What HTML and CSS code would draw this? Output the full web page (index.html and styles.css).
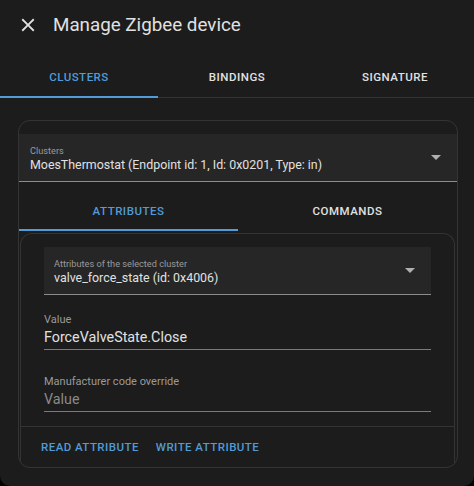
FILE: index.html
```html
<!DOCTYPE html>
<html>
<head>
<meta charset="utf-8">
<link rel="stylesheet" href="styles.css">
</head>
<body>
<div class="dialog">
  <div class="header">
    <svg class="close" viewBox="0 0 24 24" width="22" height="22"><path fill="#e1e1e1" d="M19,6.41L17.59,5L12,10.59L6.41,5L5,6.41L10.59,12L5,17.59L6.41,19L12,13.41L17.59,19L19,17.59L13.41,12L19,6.41Z"/></svg>
    <div class="title">Manage Zigbee device</div>
  </div>
  <div class="tabs main-tabs">
    <div class="tab active">Clusters</div>
    <div class="tab">Bindings</div>
    <div class="tab">Signature</div>
  </div>
  <div class="content">
    <div class="card">
      <div class="select cluster-select">
        <div class="select-text">
          <div class="label">Clusters</div>
          <div class="value">MoesThermostat (Endpoint id: 1, Id: 0x0201, Type: in)</div>
        </div>
        <span class="arrow"></span>
      </div>
      <div class="tabs sub-tabs">
        <div class="tab active">Attributes</div>
        <div class="tab">Commands</div>
      </div>
      <div class="inner-card">
        <div class="inner-body">
          <div class="select attr-select">
            <div class="select-text">
              <div class="label">Attributes of the selected cluster</div>
              <div class="value">valve_force_state (id: 0x4006)</div>
            </div>
            <span class="arrow"></span>
          </div>
          <div class="field">
            <div class="label">Value</div>
            <div class="value">ForceValveState.Close</div>
          </div>
          <div class="field">
            <div class="label">Manufacturer code override</div>
            <div class="value placeholder">Value</div>
          </div>
        </div>
        <div class="actions">
          <span class="btn">Read attribute</span>
          <span class="btn">Write attribute</span>
        </div>
      </div>
    </div>
  </div>
</div>
</body>
</html>
```

FILE: styles.css
```css
html, body {
  margin: 0;
  padding: 0;
  background: #000;
}
body {
  font-family: Roboto, "Noto Sans", sans-serif;
  color: #e1e1e1;
}
.dialog {
  width: 474px;
  height: 486px;
  background: #1c1c1c;
  border-radius: 0 0 10px 10px;
  overflow: hidden;
}
.header {
  height: 50px;
  display: flex;
  align-items: center;
  margin-bottom: 6px;
}
.close {
  margin-left: 17px;
  margin-right: 14px;
  flex: none;
}
.title {
  font-size: 18.8px;
  color: #e1e1e1;
}
.tabs {
  display: flex;
  border-bottom: 1px solid #333;
}
.main-tabs {
  height: 41px;
}
.tab {
  flex: 1;
  display: flex;
  align-items: center;
  justify-content: center;
  text-transform: uppercase;
  font-size: 11.5px;
  font-weight: 500;
  letter-spacing: 0.5px;
  color: #e1e1e1;
  position: relative;
  box-sizing: border-box;
}
.tab.active {
  color: #519bd8;
}
.tab.active::after {
  content: "";
  position: absolute;
  left: 0;
  right: 0;
  bottom: -1px;
  height: 2px;
  background: #519bd8;
}
.content {
  padding: 22px 16px 0 18px;
}
.card {
  border: 1px solid #343434;
  border-radius: 12px;
  padding-top: 13px;
  overflow: hidden;
}
.select {
  background: #262626;
  border-bottom: 1px solid #8c8c8c;
  display: flex;
  align-items: center;
  box-sizing: border-box;
}
.cluster-select {
  height: 48px;
  padding: 0 16px 0 11px;
}
.select-text {
  flex: 1;
  min-width: 0;
}
.label {
  font-size: 9.2px;
  color: #9a9a9a;
  line-height: 12px;
}
.value {
  font-size: 12.4px;
  color: #e1e1e1;
  line-height: 16px;
}
.cluster-select .select-text {
  padding-top: 2px;
}
.arrow {
  width: 0;
  height: 0;
  border-left: 5px solid transparent;
  border-right: 5px solid transparent;
  border-top: 5px solid #b0b0b0;
  flex: none;
}
.sub-tabs {
  height: 49px;
  border-bottom: none;
}
.sub-tabs .tab {
  padding-top: 8px;
}
.sub-tabs .tab.active::after {
  bottom: 0;
}
.inner-card {
  margin: 2px 2px 0 1px;
  border: 1px solid #343434;
  border-bottom: none;
  border-radius: 12px 12px 0 0;
}
.inner-body {
  padding: 13px 23px 14px 23px;
}
.attr-select {
  height: 48px;
  padding: 0 16px 0 10px;
}
.attr-select .select-text {
  padding-top: 2px;
}
.field {
  border-bottom: 1px solid #7a7a7a;
  margin-top: 18px;
}
.field + .field {
  margin-top: 25px;
}
.field .label {
  font-size: 11px;
  line-height: 13px;
  color: #9a9a9a;
}
.field .value {
  font-size: 14.3px;
  line-height: 18px;
  padding-top: 2px;
  padding-bottom: 3px;
}
.field .value.placeholder {
  color: #8a8a8a;
}
.actions {
  border-top: 1px solid #343434;
  display: flex;
  gap: 17px;
  padding: 0 20px;
  height: 40px;
  align-items: center;
}
.btn {
  text-transform: uppercase;
  font-size: 11.5px;
  font-weight: 500;
  letter-spacing: 0.45px;
  color: #519bd8;
}
```
